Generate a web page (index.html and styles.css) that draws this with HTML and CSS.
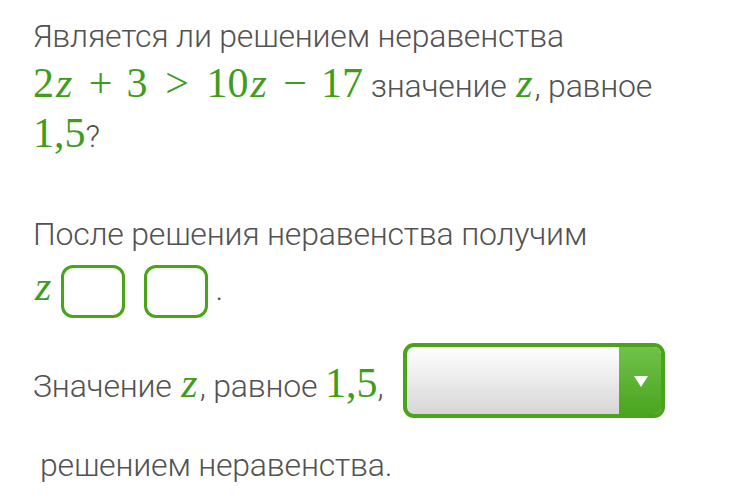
FILE: index.html
```html
<!DOCTYPE html>
<html lang="ru">
<head>
<meta charset="utf-8">
<link rel="stylesheet" href="styles.css">
</head>
<body>
<div class="page">
  <p class="para p1">Является ли решением неравенства <span class="m">2<i>z</i><span class="op">+</span>3<span class="rel">&gt;</span>10<i>z</i><span class="op">−</span>17</span> значение <span class="m"><i>z</i></span>, равное <span class="m">1,5</span>?</p>

  <p class="para p2">После решения неравенства получим</p>
  <p class="para p3"><span class="m"><i>z</i></span> <span class="box box-first"></span><span class="box"></span> .</p>

  <p class="para p4">Значение <span class="m"><i>z</i></span>, равное <span class="m">1,5</span>, <span class="select"><span class="select-field"></span><span class="select-btn"><span class="tri"></span></span></span></p>
  <p class="para p5">решением неравенства.</p>
</div>
</body>
</html>
```

FILE: styles.css
```css
html, body {
  margin: 0;
  padding: 0;
  background: #ffffff;
}
.page {
  padding: 11px 0 0 33px;
  width: 660px;
  font-family: Roboto, "Noto Sans", sans-serif;
  font-weight: 300;
  font-size: 32px;
  color: #525252;
  letter-spacing: -0.2px;
}
.para {
  margin: 0;
  line-height: 50px;
}
.m {
  font-family: "Liberation Serif", "Times New Roman", serif;
  font-size: 42px;
  font-weight: 400;
  color: #3f9c1d;
  letter-spacing: 0;
  line-height: 40px;
}
.m i {
  font-style: italic;
  padding: 0 2px;
}
.op {
  margin: 0 0.34em;
}
.rel {
  margin: 0 0.42em;
}
.p2 {
  margin-top: 48px;
}
.p3 {
  margin-top: 5px;
}
.box {
  display: inline-block;
  width: 58px;
  height: 47px;
  border: 3px solid #4aa31b;
  border-radius: 12px;
  vertical-align: -18px;
  margin-left: 19px;
  background: #fff;
  box-shadow: inset 0 2px 3px rgba(0,0,0,0.06);
}
.box-first {
  margin-left: 0;
}
.p4 {
  margin-top: 25px;
}
.select {
  display: inline-block;
  overflow: hidden;
  vertical-align: -21px;
  width: 254px;
  height: 67px;
  border: 4px solid #4aa31b;
  border-radius: 11px;
  margin-left: 12px;
  background: linear-gradient(#ffffff, #d6d6d6);
  position: relative;
}
.select-field {
  display: block;
  width: 212px;
  height: 67px;
}
.select-btn {
  position: absolute;
  top: 0;
  right: 0;
  width: 42px;
  height: 67px;
  background: linear-gradient(#6fc24a, #4ba51f);
}
.tri {
  position: absolute;
  left: 15px;
  top: 29px;
  width: 0;
  height: 0;
  border-left: 7px solid transparent;
  border-right: 7px solid transparent;
  border-top: 11px solid #ffffff;
}
.p5 {
  margin-top: 22px;
  padding-left: 7px;
}
```
